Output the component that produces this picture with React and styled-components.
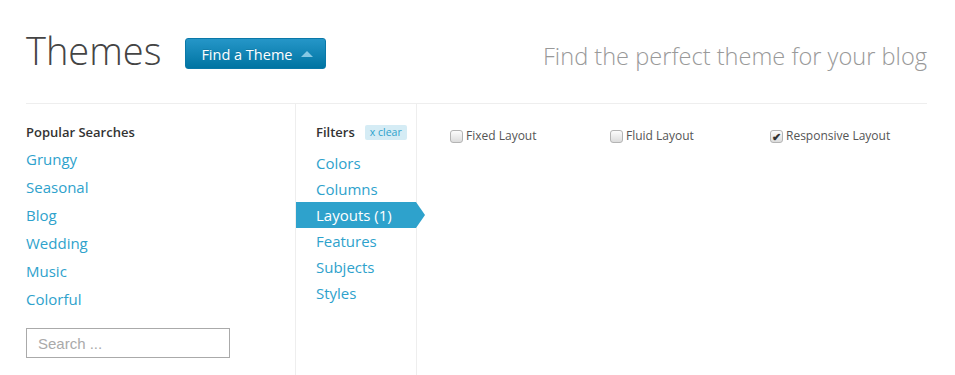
import React from 'react';
import styled, { createGlobalStyle } from 'styled-components';

const GlobalStyle = createGlobalStyle`
  html, body {
    margin: 0;
    padding: 0;
    background: #fff;
  }
  body {
    font-family: "Open Sans", "Liberation Sans", sans-serif;
    color: #333;
  }
`;

const Page = styled.div`
  padding: 0 28px 0 26px;
`;

const Header = styled.header`
  display: flex;
  align-items: flex-start;
  height: 103px;
  border-bottom: 1px solid #eee;
`;

const Title = styled.h1`
  margin: 31px 0 0;
  font-size: 38px;
  font-weight: 300;
  line-height: 38px;
  color: #444;
`;

const FindButton = styled.button`
  display: flex;
  align-items: center;
  height: 31px;
  margin: 38px 0 0 24px;
  padding: 1px 12px 0 15px;
  border: 1px solid #0a78a8;
  border-radius: 3px;
  background: linear-gradient(to bottom, #2596c8, #0074a2);
  color: #fff;
  font-family: "Open Sans", sans-serif;
  font-size: 14.5px;
  cursor: pointer;
  text-shadow: 0 -1px 0 rgba(0, 0, 0, 0.1);
`;

const UpArrow = styled.span`
  width: 0;
  height: 0;
  margin-left: 9px;
  border-left: 6px solid transparent;
  border-right: 6px solid transparent;
  border-bottom: 6px solid #86c8e4;
`;

const Tagline = styled.p`
  margin: 44px 0 0 auto;
  font-size: 23.6px;
  font-weight: 300;
  line-height: 24px;
  color: #999;
`;

const Body = styled.div`
  display: flex;
  align-items: stretch;
  min-height: 272px;
`;

const Sidebar = styled.aside`
  flex-shrink: 0;
  width: 269px;
  padding-top: 18px;
  border-right: 1px solid #eee;
`;

const Heading = styled.h3`
  margin: 0;
  font-size: 13px;
  font-weight: 600;
  line-height: 20px;
  color: #333;
`;

const LinkList = styled.ul`
  list-style: none;
  margin: ${p => p.$gap}px 0 0;
  padding: 0;
`;

const LinkItem = styled.li`
  font-size: 15px;
  line-height: ${p => p.$height}px;
  color: #2ea2cc;
`;

const SearchInput = styled.input`
  box-sizing: border-box;
  width: 204px;
  height: 30px;
  margin-top: 15px;
  padding: 0 11px;
  border: 1px solid #aaa;
  font-family: "Liberation Sans", Arial, sans-serif;
  font-size: 15px;
  outline: none;

  &::placeholder {
    color: #aaa;
  }
`;

const Filters = styled.nav`
  flex-shrink: 0;
  width: 120px;
  padding-top: 18px;
  border-right: 1px solid #eee;
`;

const FilterHead = styled.div`
  display: flex;
  align-items: center;
  gap: 10px;
  padding-left: 20px;
`;

const ClearBadge = styled.span`
  height: 15px;
  padding: 0 5px;
  border-radius: 2px;
  background: #d5ecf5;
  color: #2ea2cc;
  font-size: 10.5px;
  line-height: 15px;
`;

const FilterItem = styled.li`
  position: relative;
  padding-left: 20px;
  font-size: 15px;
  line-height: 26px;
  color: ${p => (p.$active ? '#fff' : '#2ea2cc')};
  background: ${p => (p.$active ? '#2ea2cc' : 'transparent')};

  ${p =>
    p.$active &&
    `
    &::after {
      content: '';
      position: absolute;
      top: 0;
      right: -9px;
      border-top: 13px solid transparent;
      border-bottom: 13px solid transparent;
      border-left: 9px solid #2ea2cc;
    }
  `}
`;

const Options = styled.div`
  flex: 1;
  min-width: 0;
  display: flex;
  align-items: flex-start;
  padding: 22px 0 0 33px;
`;

const Option = styled.label`
  display: flex;
  align-items: center;
  gap: 3px;
  flex: 0 0 160px;
  font-size: 12px;
  line-height: 20px;
  color: #555;
`;

const Box = styled.span`
  box-sizing: border-box;
  display: flex;
  align-items: center;
  justify-content: center;
  width: 13px;
  height: 13px;
  border: 1px solid #b4b4b4;
  border-radius: 3px;
  background: linear-gradient(to bottom, #fcfcfc, #dcdcdc);
  color: #333;
  font-size: 11px;
  font-weight: 700;
  line-height: 1;
`;

const popular = ['Grungy', 'Seasonal', 'Blog', 'Wedding', 'Music', 'Colorful'];
const filters = ['Colors', 'Columns', 'Layouts (1)', 'Features', 'Subjects', 'Styles'];
const layouts = [
  { label: 'Fixed Layout', checked: false },
  { label: 'Fluid Layout', checked: false },
  { label: 'Responsive Layout', checked: true },
];

const App = () => (
  <>
    <GlobalStyle />
    <Page>
      <Header>
        <Title>Themes</Title>
        <FindButton>
          Find a Theme
          <UpArrow />
        </FindButton>
        <Tagline>Find the perfect theme for your blog</Tagline>
      </Header>
      <Body>
        <Sidebar>
          <Heading>Popular Searches</Heading>
          <LinkList $gap={3}>
            {popular.map(item => (
              <LinkItem key={item} $height={28}>
                {item}
              </LinkItem>
            ))}
          </LinkList>
          <SearchInput placeholder="Search ..." />
        </Sidebar>
        <Filters>
          <FilterHead>
            <Heading>Filters</Heading>
            <ClearBadge>x clear</ClearBadge>
          </FilterHead>
          <LinkList $gap={8}>
            {filters.map(item => (
              <FilterItem key={item} $active={item === 'Layouts (1)'}>
                {item}
              </FilterItem>
            ))}
          </LinkList>
        </Filters>
        <Options>
          {layouts.map(opt => (
            <Option key={opt.label}>
              <Box>{opt.checked ? '✔' : ''}</Box>
              {opt.label}
            </Option>
          ))}
        </Options>
      </Body>
    </Page>
  </>
);

export default App;
